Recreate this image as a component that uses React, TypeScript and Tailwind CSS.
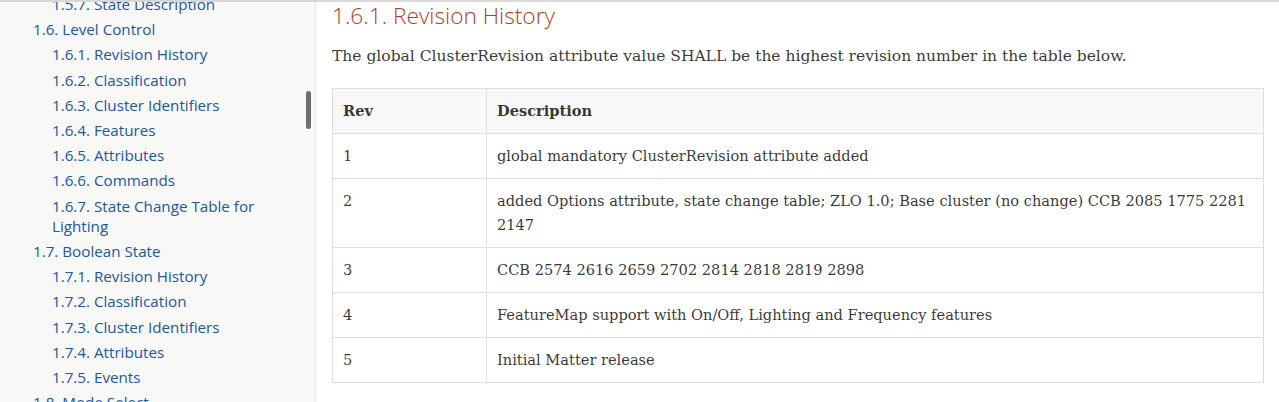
const toc: { label: string; level: number }[] = [
  { label: "1.5.7. State Description", level: 2 },
  { label: "1.6. Level Control", level: 1 },
  { label: "1.6.1. Revision History", level: 2 },
  { label: "1.6.2. Classification", level: 2 },
  { label: "1.6.3. Cluster Identifiers", level: 2 },
  { label: "1.6.4. Features", level: 2 },
  { label: "1.6.5. Attributes", level: 2 },
  { label: "1.6.6. Commands", level: 2 },
  { label: "1.6.7. State Change Table for Lighting", level: 2 },
  { label: "1.7. Boolean State", level: 1 },
  { label: "1.7.1. Revision History", level: 2 },
  { label: "1.7.2. Classification", level: 2 },
  { label: "1.7.3. Cluster Identifiers", level: 2 },
  { label: "1.7.4. Attributes", level: 2 },
  { label: "1.7.5. Events", level: 2 },
  { label: "1.8. Mode Select", level: 1 },
];

const revisions = [
  { rev: "1", desc: "global mandatory ClusterRevision attribute added" },
  {
    rev: "2",
    desc: "added Options attribute, state change table; ZLO 1.0; Base cluster (no change) CCB 2085 1775 2281 2147",
  },
  { rev: "3", desc: "CCB 2574 2616 2659 2702 2814 2818 2819 2898" },
  { rev: "4", desc: "FeatureMap support with On/Off, Lighting and Frequency features" },
  { rev: "5", desc: "Initial Matter release" },
];

function Sidebar() {
  return (
    <aside className="relative w-[316px] shrink-0 overflow-hidden border-r border-[#e7e7e9] bg-[#f8f8f7] font-['Open_Sans',sans-serif]">
      <ul className="-mt-[13px] pl-[33px] pr-[40px] text-[15.2px] leading-[20.2px] text-[#2156a5]">
        {toc.map((item, i) => (
          <li key={i} className={`mt-[5px] ${item.level === 2 ? "pl-[19px]" : ""}`}>
            {item.label}
          </li>
        ))}
      </ul>
      {/* scrollbar thumb */}
      <div className="absolute left-[306px] top-[89px] h-[38px] w-[5px] rounded-full bg-[#6f6f6f]" />
    </aside>
  );
}

export default function App() {
  return (
    <div className="h-[402px] w-[1279px] overflow-hidden bg-white">
      <div className="flex h-full border-t-2 border-[#d8d8d8]">
        <Sidebar />
        <main className="min-w-0 flex-1 px-[16px] font-['DejaVu_Serif',serif] text-[rgba(0,0,0,0.8)]">
          <h4 className="mt-0 font-['Open_Sans',sans-serif] text-[22.7px] font-light leading-[28px] text-[#ba3925]">
            1.6.1. Revision History
          </h4>
          <p className="mt-[13px] text-[15.5px] leading-[26px]">
            The global ClusterRevision attribute value SHALL be the highest revision number in the table below.
          </p>
          <table className="mt-[19px] w-[932px] table-fixed border-collapse border border-[#dedede] text-[14.6px]">
            <colgroup>
              <col className="w-[154px]" />
              <col />
            </colgroup>
            <thead>
              <tr className="bg-[#f7f8f7]">
                <th className="border border-[#dedede] px-[10px] py-[10px] text-left font-bold leading-[24px] text-[rgba(0,0,0,0.8)]">
                  Rev
                </th>
                <th className="border border-[#dedede] px-[10px] py-[10px] text-left font-bold leading-[24px] text-[rgba(0,0,0,0.8)]">
                  Description
                </th>
              </tr>
            </thead>
            <tbody>
              {revisions.map((r) => (
                <tr key={r.rev}>
                  <td className="border border-[#dedede] px-[10px] py-[10px] align-top leading-[24px]">{r.rev}</td>
                  <td className="border border-[#dedede] px-[10px] py-[10px] align-top leading-[24px]">{r.desc}</td>
                </tr>
              ))}
            </tbody>
          </table>
        </main>
      </div>
    </div>
  );
}
